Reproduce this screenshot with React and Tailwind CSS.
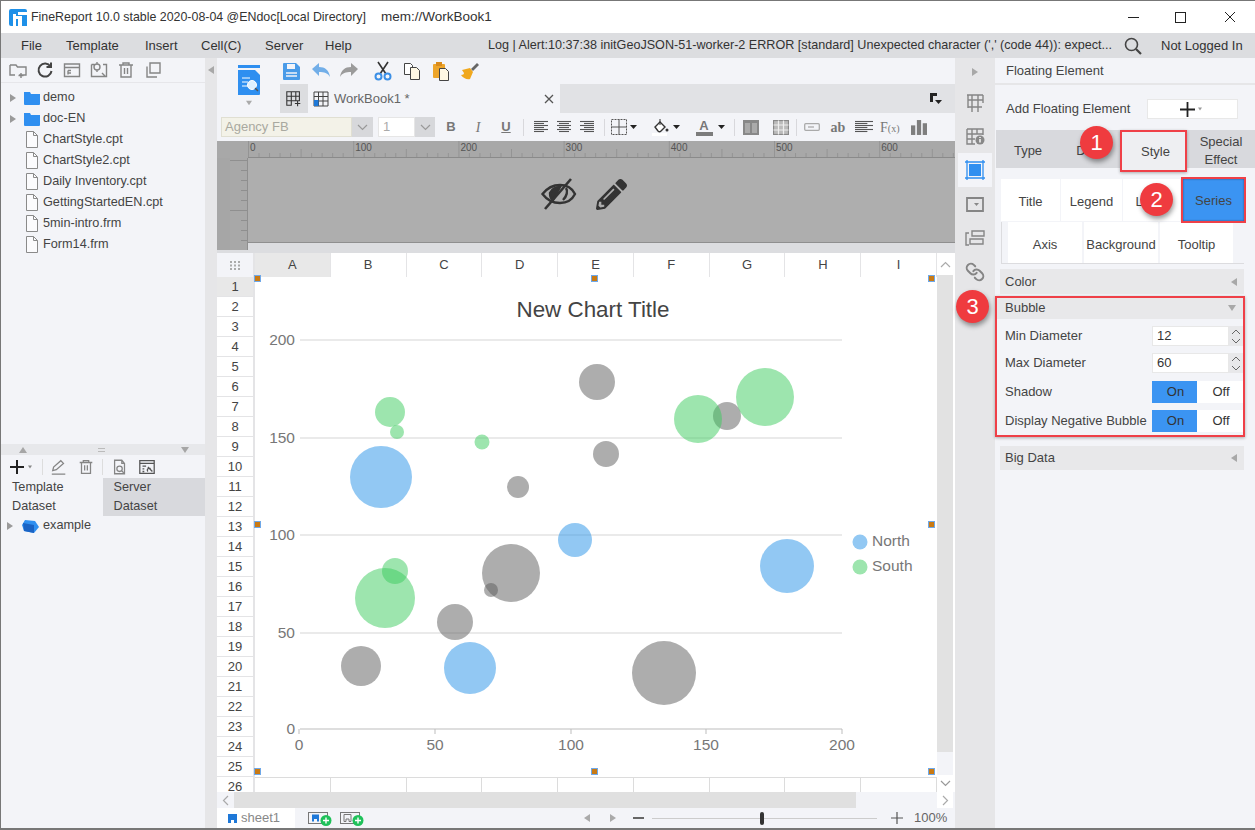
import React from "react";
import { FaPencilAlt } from "react-icons/fa";
import { Link } from "lucide-react";

const ui = { fontFamily: '"Liberation Sans", Arial, sans-serif' };

const Tri = ({ dir = "right", className = "" }) => {
  const pts = { right: "2,1 8,5 2,9", left: "8,1 2,5 8,9", down: "1,2 9,2 5,8", up: "1,8 9,8 5,2" };
  return (
    <svg width="10" height="10" viewBox="0 0 10 10" className={className}>
      <polygon points={pts[dir]} fill="currentColor" />
    </svg>
  );
};

// 20px line icon, strokes in grey unless the caller overrides the colour
const Ico = ({ children, size = 20, className = "text-[#858585]", sw = 1.4 }) => (
  <svg width={size} height={size} viewBox="0 0 20 20" fill="none" stroke="currentColor" strokeWidth={sw} className={className}>
    {children}
  </svg>
);

const Folder = () => (
  <svg width="16" height="14" viewBox="0 0 16 14">
    <path d="M0 1h6l1 2h9v10a1 1 0 0 1-1 1H1a1 1 0 0 1-1-1z" fill="#2f8ff0" />
  </svg>
);

const FileIco = () => (
  <svg width="14" height="17" viewBox="0 0 14 17" fill="#fbfbfd" stroke="#8a8a8a">
    <path d="M1.5.5h7l4 4v12h-11z" />
    <path d="M8.5.5v4h4" fill="none" />
  </svg>
);

const tree = [
  { name: "demo", folder: true },
  { name: "doc-EN", folder: true },
  { name: "ChartStyle.cpt" },
  { name: "ChartStyle2.cpt" },
  { name: "Daily Inventory.cpt" },
  { name: "GettingStartedEN.cpt" },
  { name: "5min-intro.frm" },
  { name: "Form14.frm" },
];

function LeftPanel() {
  return (
    <aside className="flex w-[204px] shrink-0 flex-col bg-[#f3f4f8] text-[12.7px] text-[#444]">
      <div className="flex h-[25px] items-center gap-[7px] border-b border-[#e6e6ea] pl-[7px]">
        <Ico><path d="M2 5h6l1.500 2H18v8h-7M2 5v10h5M13 13v5M10.500 15.500h5" /></Ico>
        <Ico className="text-[#444]" sw={2}><path d="M15.500 6.500A6.500 6.500 0 1 0 16.500 11M16 2.500v4.500h-4.500" /></Ico>
        <Ico><path d="M2.500 4h15v12.500h-15zM2.500 7.500h15M6 10.500h3M6 13h3M6 10.500v4" /></Ico>
        <Ico><path d="M2.500 4.500h3M14 4.500h3.500v12h-15v-12M8 4a3 3 0 1 1 0 6 3 3 0 0 1 0-6zM8 2v2M8 10v2M13 13l3 3" /></Ico>
        <Ico><path d="M3 5h14M7 5V3h6v2M5 5v12h10V5M8.500 8v6M11.500 8v6" /></Ico>
        <Ico><path d="M7 3h10v10H7zM4 6.500v10.500h10" /></Ico>
      </div>
      <div className="flex h-[361px] flex-col pt-[4px]">
        {tree.map((item) => (
          <div key={item.name} className="flex h-[21px] items-center">
            <span className="flex w-[23px] justify-center text-[#9a9a9a]">{item.folder && <Tri />}</span>
            <span className="flex w-[19px] justify-start">{item.folder ? <Folder /> : <span className="pl-[1px]"><FileIco /></span>}</span>
            <span>{item.name}</span>
          </div>
        ))}
      </div>
      <div className="flex h-[11px] items-center bg-[#e7e8eb] text-[#a6a6a6]">
        <Tri dir="up" className="ml-[17px]" />
        <span className="ml-[70px] h-[4px] w-[7px] border-y border-[#bbb]" />
        <Tri dir="down" className="ml-[75px]" />
      </div>
      <div className="flex h-[23px] items-center pl-[8px]">
        <svg width="16" height="16" viewBox="0 0 16 16" stroke="#222" strokeWidth="2"><path d="M8 1v14M1 8h14" /></svg>
        <Tri dir="down" className="scale-50 text-[#888]" />
        <span className="ml-[7px] mr-[7px] h-[16px] w-px bg-[#ddd]" />
        <Ico size={18}><path d="M3 14l1-4 8-7 3 3-8 7zM2 18h15" /></Ico>
        <span className="ml-[9px]"><Ico size={18}><path d="M3 5h14M7 5V3h6v2M5 5v12h10V5M8.500 8v6M11.500 8v6" /></Ico></span>
        <span className="ml-[7px] mr-[8px] h-[16px] w-px bg-[#ddd]" />
        <Ico size={18}><path d="M12 2.500H4v15h11V6zM12 2.500V6h3M9.500 9a3 3 0 1 1 0 6 3 3 0 0 1 0-6zM12 14l2 2.500" /></Ico>
        <span className="ml-[9px]"><Ico size={18} className="text-[#555]"><path d="M2 3h16v14H2zM2 6h16M5 9h4M5 12h2M5 15h2M11 10l5 5M11 15a2 2 0 0 1 3-3" /></Ico></span>
      </div>
      <div className="flex h-[38px] leading-[19px]">
        <div className="w-[102px] pl-[11px]">Template<br />Dataset</div>
        <div className="w-[103px] bg-[#d8d9dd] pl-[11px]">Server<br />Dataset</div>
      </div>
      <div className="flex h-[19px] items-center">
        <Tri className="ml-[4px] text-[#9a9a9a]" />
        <svg width="18" height="14" viewBox="0 0 18 14" className="ml-[7px] mr-[3px]">
          <path d="M3 1l10 1 4 6-5 6-10-2-2-6z" fill="#2f8ff0" />
          <path d="M1 4l11 2v8L2 12z" fill="#1a63c4" />
        </svg>
        <span>example</span>
      </div>
    </aside>
  );
}

const Sep = ({ h = "h-[20px]" }) => <span className={`w-px bg-[#d8d8dc] ${h}`} />;

function TopToolbar() {
  return (
    <div className="flex h-[26px] items-center pl-[2px]">
      <svg width="19" height="19" viewBox="0 0 19 19">
        <path d="M1 2a1 1 0 0 1 1-1h12l4 4v12a1 1 0 0 1-1 1H2a1 1 0 0 1-1-1z" fill="#4a9be8" />
        <rect x="5" y="2" width="8" height="5" fill="#f3f4f8" />
        <path d="M4 11h11M4 14h11" stroke="#f3f4f8" strokeWidth="1.500" />
      </svg>
      <svg width="20" height="18" viewBox="0 0 20 18" className="ml-[10px]">
        <path d="M1 7l7-6v4c6 0 10 3 11 10-2-4-6-5-11-5v4z" fill="#72aee8" />
      </svg>
      <svg width="20" height="18" viewBox="0 0 20 18" className="ml-[8px]">
        <path d="M19 7l-7-6v4C6 5 2 8 1 15c2-4 6-5 11-5v4z" fill="#9b9b9b" />
      </svg>
      <span className="ml-[8px] mr-[7px]"><Sep /></span>
      <svg width="18" height="20" viewBox="0 0 18 20" fill="none">
        <path d="M4 1l8 12M14 1L6 13" stroke="#333" strokeWidth="1.600" />
        <circle cx="4.500" cy="15.500" r="3" stroke="#3b8fe6" strokeWidth="2" />
        <circle cx="13.500" cy="15.500" r="3" stroke="#3b8fe6" strokeWidth="2" />
      </svg>
      <svg width="18" height="18" viewBox="0 0 18 18" className="ml-[11px]" stroke="#444" fill="#fff">
        <path d="M1.500 1.500h6l2 2v9h-8z" />
        <path d="M7.500 5.500h6l3 3v9h-9z" fill="#fff8e4" />
      </svg>
      <svg width="18" height="19" viewBox="0 0 18 19" className="ml-[11px]">
        <rect x="1" y="2" width="12" height="14" rx="1" fill="#eda52a" />
        <rect x="4" y="0" width="6" height="4" fill="#d98b1c" />
        <path d="M7.500 6.500h6l3 3v9h-9z" fill="#fff8e4" stroke="#444" />
      </svg>
      <svg width="19" height="18" viewBox="0 0 19 18" className="ml-[10px]">
        <path d="M11 7l6-6 2 2-6 6z" fill="#666" />
        <path d="M2 8l8-2 3 4-3 7c-3 1-7-1-9-4 2 0 3-1 3-2z" fill="#f0a81e" />
      </svg>
      <span className="ml-[8px]"><Sep /></span>
    </div>
  );
}

function TabRow() {
  return (
    <div className="flex h-[29px] items-stretch bg-[#e1e2e5]">
      <div className="flex w-[28px] items-center justify-center bg-[#dcdde0]">
        <Ico size={18} className="text-[#333]" sw={1.200}><path d="M2 2h14v10H2zM2 7h14M7 2v15H2v-5M12 2v10M14 12v6M11 15h6" /></Ico>
      </div>
      <div className="flex w-[252px] items-center bg-[#f3f4f8] pl-[5px] pr-[6px] text-[13px] text-[#666]">
        <svg width="16" height="16" viewBox="0 0 16 16" fill="none">
          <path d="M1 1h14v14H1zM1 5.500h14M1 10h14M5.500 1v14M10 1v14" stroke="#444" />
          <rect x="1" y="9" width="4.500" height="6" fill="#1e78d8" />
        </svg>
        <span className="ml-[5px] flex-1">WorkBook1 *</span>
        <svg width="10" height="10" viewBox="0 0 10 10" stroke="#555" strokeWidth="1.300"><path d="M1 1l8 8M9 1l-8 8" /></svg>
      </div>
      <div className="flex flex-1 items-center justify-end pr-[12px]">
        <svg width="14" height="14" viewBox="0 0 14 14"><path d="M1 1h7v3H4v6H1z" fill="#222" /><path d="M6 8h7l-3.500 4z" fill="#222" /></svg>
      </div>
    </div>
  );
}

const Caret = ({ className = "" }) => (
  <svg width="7" height="4" viewBox="0 0 7 4" className={className}><path d="M0 0h7L3.500 4z" fill="#222" /></svg>
);

const Chevron = () => (
  <svg width="11" height="7" viewBox="0 0 11 7" fill="none" stroke="#999" strokeWidth="1.200"><path d="M1 1l4.500 4.500L10 1" /></svg>
);

const AlignIco = ({ lines, w = 16 }) => (
  <svg width={w} height="14" viewBox="0 0 16 14" preserveAspectRatio="none" stroke="#555" strokeWidth="1.100">
    {lines.map((l, i) => <path key={i} d={`M${l[0]} ${i * 2 + 1.500}H${l[1]}`} />)}
  </svg>
);

function FormatBar() {
  return (
    <div className="flex h-[28px] items-center bg-[#f3f4f8] pl-[4px]">
      <div className="flex h-[20px] w-[152px] items-stretch">
        <div className="flex-1 border border-[#e0dfd2] bg-[#f3f2e8] pl-[3px] text-[13px] leading-[18px] text-[#a9a9a0]">Agency FB</div>
        <div className="flex w-[21px] items-center justify-center bg-[#d7d8db]"><Chevron /></div>
      </div>
      <div className="ml-[5px] flex h-[20px] w-[57px] items-stretch">
        <div className="flex-1 border border-[#e6e6e6] bg-white pl-[4px] text-[13px] leading-[18px] text-[#aaa]">1</div>
        <div className="flex w-[20px] items-center justify-center bg-[#d7d8db]"><Chevron /></div>
      </div>
      <span className="ml-[6px] w-[20px] text-center text-[13px] font-bold text-[#777]">B</span>
      <span className="ml-[7px] w-[20px] text-center font-['Liberation_Serif'] text-[14px] italic text-[#777]">I</span>
      <span className="ml-[8px] w-[20px] text-center text-[13px] font-bold text-[#777] underline">U</span>
      <span className="ml-[7px]"><Sep h="h-[17px] block" /></span>
      <span className="ml-[9px]"><AlignIco lines={[[1, 15], [1, 11], [1, 15], [1, 11], [1, 15], [1, 11]]} /></span>
      <span className="ml-[7px]"><AlignIco lines={[[1, 15], [3, 13], [1, 15], [3, 13], [1, 15], [3, 13]]} /></span>
      <span className="ml-[7px]"><AlignIco lines={[[1, 15], [5, 15], [1, 15], [5, 15], [1, 15], [5, 15]]} /></span>
      <span className="ml-[9px]"><Sep h="h-[17px] block" /></span>
      <svg width="16" height="16" viewBox="0 0 16 16" fill="none" stroke="#555" className="ml-[6px]">
        <path d="M.5.500h15v15H.5z" strokeDasharray="2 1" /><path d="M8 .5v15M.5 8h15" />
      </svg>
      <Caret className="ml-[3px]" />
      <svg width="18" height="18" viewBox="0 0 18 18" className="ml-[15px]">
        <path d="M3 9l5-5 5 5-4 4c-1 1-2 1-3 0z" fill="#fff" stroke="#333" strokeWidth="1.400" />
        <path d="M8 1v6" stroke="#333" />
        <circle cx="15" cy="12" r="1.500" fill="#333" />
        <rect x="0" y="15" width="15" height="3" fill="#fff" />
      </svg>
      <Caret className="ml-[3px]" />
      <div className="ml-[15px] flex w-[18px] flex-col items-center">
        <span className="text-[13px] font-bold leading-[13px] text-[#777]">A</span>
        <span className="h-[4px] w-[17px] bg-[#7c7c7c]" />
      </div>
      <Caret className="ml-[5px]" />
      <span className="ml-[9px]"><Sep h="h-[17px] block" /></span>
      <svg width="16" height="15" viewBox="0 0 16 15" className="ml-[8px]">
        <rect width="16" height="15" fill="#888" /><rect x="2" y="3" width="5" height="10" fill="#aaa" /><rect x="9" y="3" width="5" height="10" fill="#aaa" />
      </svg>
      <svg width="16" height="15" viewBox="0 0 16 15" className="ml-[14px]" fill="none" stroke="#888" strokeWidth="1.200">
        <rect x=".5" y=".5" width="15" height="14" fill="#bbb" /><path d="M.5 5h15M.5 10h15M5.500.5v14M10.500.5v14" stroke="#eee" />
      </svg>
      <span className="ml-[7px]"><Sep h="h-[17px] block" /></span>
      <svg width="16" height="8" viewBox="0 0 16 8" fill="none" stroke="#aaa" strokeWidth="1.300" className="ml-[7px]">
        <rect x=".7" y=".7" width="14.600" height="6.600" rx="1" /><path d="M4 4h6" />
      </svg>
      <span className="ml-[10px] w-[16px] text-center font-['Liberation_Serif'] text-[14px] font-bold text-[#777]">ab</span>
      <span className="ml-[9px]"><AlignIco w={18} lines={[[0, 16], [0, 11], [0, 16], [0, 11], [0, 16], [0, 11]]} /></span>
      <span className="ml-[7px] w-[22px] whitespace-nowrap font-['Liberation_Serif'] text-[14px] text-[#777]">F<span className="text-[10px]">(x)</span></span>
      <svg width="16" height="15" viewBox="0 0 15 14" className="ml-[9px]" fill="#7e7e7e">
        <rect x="0" y="5" width="4" height="9" /><rect x="5.500" y="0" width="4" height="14" /><rect x="11" y="3" width="4" height="11" />
      </svg>
    </div>
  );
}

// ruler ticks are a drawing, one long tick every 105px
function Ruler() {
  const ticks = Array.from({ length: 70 }, (_, i) => i);
  const labels = [0, 100, 200, 300, 400, 500, 600];
  return (
    <svg width="707" height="17" viewBox="0 0 707 17" className="block">
      {ticks.map((i) => {
        const x = i * 10.52 + 0.5;
        const len = i % 10 === 0 ? 17 : i % 5 === 0 ? 9 : 5;
        return <line key={i} x1={x} x2={x} y1={17 - len} y2={17} stroke="#8f8f8f" strokeWidth="0.800" />;
      })}
      <line x1="0" x2="707" y1="16.500" y2="16.500" stroke="#8a8a8a" />
      {labels.map((n, i) => (
        <text key={n} x={i * 105.2 + 2} y="10" fontSize="10" fill="#555" style={ui}>{n}</text>
      ))}
    </svg>
  );
}

function RulerArea() {
  const vt = [0, 1, 2, 3, 4, 5, 6, 7, 8];
  return (
    <div className="flex h-[102px] flex-col border-b border-[#8f8f8f] bg-[#aeaeae]">
      <div className="flex h-[17px] bg-[#a8a8a8]">
        <div className="w-[31px] shrink-0" />
        <Ruler />
      </div>
      <div className="flex flex-1">
        <div className="flex w-[13px] shrink-0 bg-[#a6a6a6]" />
        <div className="flex w-[18px] shrink-0 flex-col items-end border-r border-[#8f8f8f] bg-[#a8a8a8] pt-[2px]">
          {vt.map((i) => <span key={i} className={`mb-[9px] h-px bg-[#8f8f8f] ${i % 5 === 0 ? "w-[17px]" : "w-[6px]"}`} />)}
        </div>
        <div className="flex flex-1 items-center pb-[20px] pl-[293px] text-[#333]">
          <svg width="36" height="32" viewBox="0 0 36 32" fill="none" stroke="#333" strokeWidth="2.400">
            <path d="M1.500 16C7 9 14 7 19 7c6 0 12 3 15 9-3 6-9 9-15 9-6 0-13-3-17.500-9z" />
            <path d="M9 15c2-4 6-6 10-6l-7 13c-2-1-3-4-3-7z" fill="#333" />
            <path d="M25 10c2 3 1 8-3 12" fill="none" />
            <path d="M30 1L4 31" strokeWidth="2.600" />
          </svg>
          <FaPencilAlt className="ml-[19px] text-[31px]" />
        </div>
      </div>
    </div>
  );
}

const COLS = ["A", "B", "C", "D", "E", "F", "G", "H", "I"];
const ROWS = Array.from({ length: 26 }, (_, i) => i + 1);

const blue = [[381, 477, 31], [575, 540, 17], [470, 668, 26], [787, 566, 27]];
const green = [[390, 412, 15], [397, 432, 7], [482, 442, 7.5], [698, 419, 24], [765, 397, 29], [385, 598, 30], [395, 571, 13]];
const gray = [[597, 382, 18], [727, 416, 14], [606, 454, 13], [518, 487, 11], [511, 573, 29], [491, 590, 7], [455, 622, 18], [361, 666, 20], [664, 673, 32]];

function BubbleChart() {
  const grid = [[340, 200], [438, 150], [535, 100], [633, 50], [729, 0]];
  const xs = [[299, 0], [435, 50], [571, 100], [706, 150], [842, 200]];
  return (
    <svg width="682" height="498" viewBox="255 277 682 498" className="block" style={ui}>
      <text x="593" y="317" textAnchor="middle" fontSize="22.400" fill="#444">New Chart Title</text>
      {grid.map(([y, n]) => (
        <g key={n}>
          <line x1="300" x2="842" y1={y} y2={y} stroke={n === 0 ? "#bdbdbd" : "#d6d6d6"} strokeWidth="1.200" />
          <text x="295" y={y + 5} textAnchor="end" fontSize="15.500" fill="#777">{n}</text>
        </g>
      ))}
      {xs.map(([x, n]) => (
        <g key={n}>
          <line x1={x} x2={x} y1="729" y2="734" stroke="#bdbdbd" />
          <text x={x} y="750" textAnchor="middle" fontSize="15.500" fill="#777">{n}</text>
        </g>
      ))}
      {blue.map(([x, y, r]) => <circle key={x} cx={x} cy={y} r={r} fill="#2591e7" fillOpacity="0.5" />)}
      {gray.map(([x, y, r]) => <circle key={x} cx={x} cy={y} r={r} fill="#5c5c5c" fillOpacity="0.5" />)}
      {green.map(([x, y, r]) => <circle key={x} cx={x} cy={y} r={r} fill="#3bcb5d" fillOpacity="0.5" />)}
      <circle cx="860" cy="542" r="7.500" fill="#92c8f3" />
      <circle cx="860" cy="567" r="7.500" fill="#9de5ae" />
      <text x="872" y="546" fontSize="15.500" fill="#777">North</text>
      <text x="872" y="571" fontSize="15.500" fill="#777">South</text>
    </svg>
  );
}

const Handle = ({ className }) => (
  <span className={`absolute h-[7px] w-[7px] border border-[#6fa8e8] bg-[#c97a14] ${className}`} />
);

function Sheet() {
  return (
    <div className="flex h-[539px] bg-white text-[13px] text-[#444]">
      <div className="flex w-[38px] shrink-0 flex-col overflow-hidden border-r-2 border-[#e4e4e6]">
        <div className="flex h-[24px] shrink-0 items-center justify-center bg-[#f3f4f8]">
          <svg width="11" height="9" viewBox="0 0 11 9" fill="#aaa">
            {[0, 4, 8].map((x) => [0, 3.500, 7].map((y) => <rect key={`${x}${y}`} x={x} y={y} width="2" height="2" />))}
          </svg>
        </div>
        {ROWS.map((r) => (
          <div key={r} className={`flex h-[20px] shrink-0 items-center justify-center border-b border-[#e4e4e6] ${r === 1 ? "bg-[#e8e8e8]" : ""}`}>{r}</div>
        ))}
      </div>
      <div className="flex w-[682px] shrink-0 flex-col">
        <div className="flex h-[24px] shrink-0">
          {COLS.map((c) => (
            <div key={c} className={`flex flex-1 items-center justify-center border-r border-[#e4e4e6] ${c === "A" ? "bg-[#e8e8e8]" : ""}`}>{c}</div>
          ))}
        </div>
        <div className="relative h-[498px] shrink-0">
          <BubbleChart />
          <Handle className="left-[-1px] top-[-2px]" />
          <Handle className="left-[336px] top-[-2px]" />
          <Handle className="left-[673px] top-[-2px]" />
          <Handle className="left-[-1px] top-[244px]" />
          <Handle className="left-[673px] top-[244px]" />
          <Handle className="left-[-1px] top-[491px]" />
          <Handle className="left-[336px] top-[491px]" />
          <Handle className="left-[673px] top-[491px]" />
        </div>
        <div className="flex flex-1 pt-[2px]">
          {COLS.map((c) => <div key={c} className="flex-1 border-r border-t border-[#dcdcdc]" />)}
        </div>
      </div>
      <div className="flex w-[16px] shrink-0 flex-col bg-[#f3f4f8]">
        <div className="flex h-[22px] items-center justify-center bg-white">
          <svg width="11" height="7" viewBox="0 0 11 7" fill="none" stroke="#aaa" strokeWidth="1.200"><path d="M1 6l4.500-4.500L10 6" /></svg>
        </div>
        <div className="h-[477px] w-[16px] bg-[#e2e2e2]" />
        <div className="flex-1" />
        <div className="flex h-[17px] w-[16px] items-center justify-center bg-white"><Chevron /></div>
      </div>
    </div>
  );
}

const SheetAdd = ({ className, fill }) => (
  <svg width="25" height="15" viewBox="0 0 25 15" className={className}>
    <rect x=".5" y="1.500" width="19" height="11" fill="#f3f4f8" stroke="#777" />
    <path d="M4 3.500h7v7H9V8H6v2.500H4z" fill={fill} stroke={fill === "none" ? "#777" : "none"} />
    <circle cx="18" cy="9.500" r="5.500" fill="#1fc15a" />
    <path d="M18 6.500v6M15 9.500h6" stroke="#fff" strokeWidth="1.400" />
  </svg>
);

function SheetBars() {
  return (
    <>
      <div className="flex h-[16px] bg-[#f3f4f8]">
        <div className="flex w-[17px] items-center justify-center">
          <svg width="7" height="11" viewBox="0 0 7 11" fill="none" stroke="#aaa" strokeWidth="1.200"><path d="M6 1L1.500 5.500 6 10" /></svg>
        </div>
        <div className="w-[622px] bg-[#e0e0e0]" />
        <div className="flex-1" />
        <div className="mr-[2px] flex w-[16px] items-center justify-center bg-white">
          <svg width="7" height="11" viewBox="0 0 7 11" fill="none" stroke="#aaa" strokeWidth="1.200"><path d="M1 1l4.500 4.500L1 10" /></svg>
        </div>
      </div>
      <div className="flex h-[20px] items-center bg-[#f3f4f8] text-[13px] text-[#888]">
        <div className="flex h-full w-[78px] items-center bg-white pl-[11px]">
          <svg width="9" height="9" viewBox="0 0 9 9" className="mr-[4px]"><path d="M0 0h9v9H6V6H3v3H0z" fill="#1e78d8" /></svg>
          sheet1
        </div>
        <SheetAdd className="ml-[13px]" fill="#1e78d8" />
        <SheetAdd className="ml-[7px]" fill="none" />
        <Tri dir="left" className="ml-[217px] text-[#aaa]" />
        <Tri className="ml-[16px] text-[#aaa]" />
        <span className="ml-[15px] h-[2px] w-[11px] bg-[#666]" />
        <div className="relative ml-[8px] h-px w-[225px] bg-[#ccc]">
          <span className="absolute left-[108px] top-[-6px] h-[13px] w-[4px] rounded-sm bg-[#333]" />
        </div>
        <svg width="12" height="12" viewBox="0 0 12 12" stroke="#555" strokeWidth="1.200" className="ml-[14px]"><path d="M6 0v12M0 6h12" /></svg>
        <span className="ml-[11px] text-[#666]">100%</span>
      </div>
    </>
  );
}

const rail = [
  <Ico key="a"><path d="M2 3h16M3 3v13M3 15h14M7 3v17M13 3v17M18 3v8M13 8h5M3 8h10" /></Ico>,
  <Ico key="b"><path d="M2 3h16v6M2 3v15h8M2 8h16M2 13h8M7 3v15M12 3v5" /><circle cx="15" cy="14" r="4.500" fill="#888" stroke="none" /><path d="M15 13v3.500M15 11v1" stroke="#fff" /></Ico>,
  <svg key="c" width="22" height="22" viewBox="0 0 22 22" fill="none" stroke="#2f8ff0" strokeWidth="1.300"><path d="M3 3h16v16H3zM1 3h20M1 19h20M3 1v20M19 1v20" /><rect x="5" y="5" width="12" height="12" fill="#2f8ff0" stroke="none" /></svg>,
  <Ico key="d"><path d="M2 4h16v13H2z" strokeWidth="1.800" /><path d="M9 9h5l-2.500 3z" fill="#888" stroke="none" /></Ico>,
  <Ico key="e"><path d="M7 3h12v5H7zM5 11h13v5H5zM4 5H1v12h3" /></Ico>,
  <Link key="f" size={20} strokeWidth={2.400} className="-scale-x-100 text-[#858585]" />,
];

function IconRail() {
  return (
    <div className="flex w-[40px] shrink-0 flex-col items-center bg-[#e6e6e8]">
      <div className="flex h-[27px] items-center text-[#a8a8a8]"><Tri /></div>
      {rail.map((icon, i) => (
        <div key={i} className={`flex h-[34px] w-[34px] items-center justify-center ${i === 2 ? "bg-[#f3f4f8]" : ""}`}>{icon}</div>
      ))}
    </div>
  );
}

const Badge = ({ n, className }) => (
  <span className={`absolute z-20 flex h-[33px] w-[33px] items-center justify-center rounded-full bg-[#ef3b3f] text-[22px] text-white shadow-[1px_3px_5px_rgba(0,0,0,0.4)] ${className}`}>{n}</span>
);

const Spinner = ({ value }) => (
  <div className="flex h-[20px] w-[91px]">
    <div className="flex-1 border border-[#e8e8e8] bg-white pl-[4px] text-[13px] leading-[18px] text-[#333]">{value}</div>
    <div className="flex w-[14px] flex-col items-center justify-center gap-[3px] bg-[#e8e8ea]">
      <svg width="10" height="6" viewBox="0 0 10 6" fill="none" stroke="#666"><path d="M1 5l4-4 4 4" /></svg>
      <svg width="10" height="6" viewBox="0 0 10 6" fill="none" stroke="#666"><path d="M1 1l4 4 4-4" /></svg>
    </div>
  </div>
);

const Toggle = () => (
  <div className="flex h-[22px] w-[91px] text-[13px] leading-[22px] text-[#333]">
    <span className="w-[45px] bg-[#3b94f2] pl-[2px] text-center">On</span>
    <span className="flex-1 bg-white pl-[2px] text-center">Off</span>
  </div>
);

const Section = ({ label, h = "h-[25px]" }) => (
  <div className={`ml-[5px] flex w-[244px] items-center justify-between bg-[#e8e8ea] pl-[5px] pr-[5px] ${h}`}>
    {label}
    <Tri dir="left" className="text-[#a8a8a8]" />
  </div>
);

function RightPanel() {
  return (
    <aside className="relative w-[260px] shrink-0 bg-[#f3f4f8] text-[13px] text-[#444]">
      <div className="flex h-[27px] items-center border-b-2 border-[#e6e6e8] pl-[11px] pt-[1px]">Floating Element</div>
      <div className="flex h-[45px] items-center pl-[11px] pt-[3px]">
        <span className="w-[141px]">Add Floating Element</span>
        <div className="flex h-[20px] w-[91px] items-center justify-center border border-[#e8e8e8] bg-white">
          <svg width="15" height="15" viewBox="0 0 15 15" stroke="#222" strokeWidth="1.800"><path d="M7.500 0v15M0 7.500h15" /></svg>
          <Tri dir="down" className="scale-50 text-[#999]" />
        </div>
      </div>
      <div className="ml-px flex h-[38px] items-center bg-[#d8d9dd] pt-[3px] text-center">
        <div className="w-[64px] pt-[1px]">Type</div>
        <div className="w-[60px] pt-[1px]">Data</div>
        <div className="z-10 -my-[2px] flex h-[42px] w-[67px] items-center justify-center border-2 border-[#ef4048] bg-[#eeeff2] pl-[4px] pt-[3px] shadow-[0_1px_3px_rgba(0,0,0,0.3)]">Style</div>
        <div className="flex-1 leading-[18px]">Special<br />Effect</div>
      </div>
      <div className="mt-[11px] flex h-[42px] pl-[6px] text-center leading-[45px]">
        <div className="w-[59px] bg-white">Title</div>
        <div className="ml-px w-[61px] bg-white">Legend</div>
        <div className="ml-px w-[57px] bg-white">Label</div>
        <div className="z-10 -my-[2px] ml-px h-[46px] w-[65px] border-2 border-[#ef4048] bg-[#3b94f2] leading-[44px] shadow-[inset_0_0_2px_rgba(0,0,0,0.5)]">Series</div>
      </div>
      <div className="mt-px ml-[6px] flex h-[42px] w-[243px] border-b border-l border-[#dcdcdf] pl-[6px] text-center leading-[46px]">
        <div className="w-[74px] bg-white">Axis</div>
        <div className="ml-[2px] w-[74px] whitespace-nowrap bg-white">Background</div>
        <div className="ml-[2px] w-[73px] bg-white">Tooltip</div>
      </div>
      <div className="mt-[5px]"><Section label="Color" /></div>
      <div className="mt-[2px] h-[141px] w-[250px] border-2 border-[#ef4048] shadow-[0_1px_3px_rgba(0,0,0,0.3)]">
        <div className="flex h-[21px] items-center justify-between bg-[#e8e8ea] pb-[2px] pl-[8px] pr-[6px]">
          Bubble
          <Tri dir="down" className="text-[#a8a8a8]" />
        </div>
        <div className="flex flex-col pl-[8px] pt-[7px]">
          <div className="flex h-[20px] items-center justify-between"><span>Min Diameter</span><Spinner value="12" /></div>
          <div className="mt-[7px] flex h-[20px] items-center justify-between"><span>Max Diameter</span><Spinner value="60" /></div>
          <div className="mt-[8px] flex h-[22px] items-center justify-between"><span>Shadow</span><Toggle /></div>
          <div className="mt-[7px] flex h-[22px] items-center justify-between"><span className="whitespace-nowrap">Display Negative Bubble</span><Toggle /></div>
        </div>
      </div>
      <div className="mt-[9px]"><Section label="Big Data" h="h-[24px]" /></div>
    </aside>
  );
}

export default function App() {
  const menu = [
    ["File", "w-[45px]"],
    ["Template", "w-[79px]"],
    ["Insert", "w-[56px]"],
    ["Cell(C)", "w-[64px]"],
    ["Server", "w-[60px]"],
    ["Help", "w-[55px]"],
  ];
  return (
    <div className="relative flex h-[830px] w-[1255px] flex-col overflow-hidden border-b-2 border-l border-t border-[#777] bg-white" style={ui}>
      <div className="flex h-[32px] shrink-0 items-center pl-[8px] text-[#333]">
        <svg width="18" height="17" viewBox="0 0 18 17">
          <path d="M2 0h14a2 2 0 0 1 2 2v15h-5V7H9v10H2a2 2 0 0 1-2-2V2a2 2 0 0 1 2-2z" fill="#1e90e8" />
          <rect x="9" y="3" width="9" height="3" fill="#fff" />
          <rect x="4" y="5" width="3" height="12" fill="#fff" />
          <rect x="7" y="7" width="2" height="3" fill="#fff" />
        </svg>
        <span className="ml-[4px] w-[350px] whitespace-nowrap text-[12.4px]">FineReport 10.0 stable 2020-08-04 @ENdoc[Local Directory]</span>
        <span className="text-[13.5px]">mem://WorkBook1</span>
        <div className="ml-auto flex items-center">
          <span className="h-px w-[11px] bg-[#222]" />
          <span className="ml-[36px] h-[11px] w-[11px] border border-[#222]" />
          <svg width="12" height="12" viewBox="0 0 12 12" stroke="#222" className="ml-[38px] mr-[19px]"><path d="M1 1l10 10M11 1L1 11" /></svg>
        </div>
      </div>
      <div className="flex h-[25px] shrink-0 items-center bg-[#dcdde0] pl-[20px] text-[13px] text-[#333]">
        {menu.map(([label, w]) => <span key={label} className={w}>{label}</span>)}
        <span className="ml-[108px] w-[631px] overflow-hidden whitespace-nowrap text-[12.6px]">Log | Alert:10:37:38 initGeoJSON-51-worker-2 ERROR [standard] Unexpected character (',' (code 44)): expect...</span>
        <svg width="18" height="18" viewBox="0 0 18 18" fill="none" stroke="#444" strokeWidth="1.600" className="ml-[5px]">
          <circle cx="7.500" cy="7.500" r="6" /><path d="M12 12l5 5" strokeWidth="2.200" />
        </svg>
        <span className="ml-[19px] whitespace-nowrap">Not Logged In</span>
      </div>
      <div className="flex min-h-0 flex-1">
        <LeftPanel />
        <div className="flex w-[12px] shrink-0 flex-col items-center bg-[#e6e6e8] pt-[7px] text-[#a8a8a8]">
          <Tri dir="left" />
        </div>
        <main className="flex w-[738px] shrink-0 flex-col bg-[#dcdde0]">
          <div className="flex h-[55px] bg-[#f3f4f8]">
            <div className="flex w-[63px] shrink-0 flex-col items-center pt-[7px]">
              <svg width="24" height="30" viewBox="0 0 24 30">
                <rect x="1" y="0" width="22" height="3" fill="#2f8ff0" />
                <path d="M1 5h17l5 5v19a1 1 0 0 1-1 1H1z" fill="#2f8ff0" />
                <path d="M5 13h8M5 17h6M5 21h6" stroke="#fff" />
                <circle cx="15" cy="20" r="4.500" fill="#dff0ff" stroke="#fff" />
                <path d="M18 23l3 3" stroke="#555" strokeWidth="1.500" />
              </svg>
              <Tri dir="down" className="mt-[3px] scale-75 text-[#aaa]" />
            </div>
            <div className="flex flex-1 flex-col">
              <TopToolbar />
              <TabRow />
            </div>
          </div>
          <FormatBar />
          <RulerArea />
          <div className="h-[10px]" />
          <Sheet />
          <SheetBars />
        </main>
        <IconRail />
        <RightPanel />
      </div>
      <Badge n="1" className="left-[1079px] top-[125px]" />
      <Badge n="2" className="left-[1139px] top-[182px]" />
      <Badge n="3" className="left-[955px] top-[289px]" />
    </div>
  );
}
